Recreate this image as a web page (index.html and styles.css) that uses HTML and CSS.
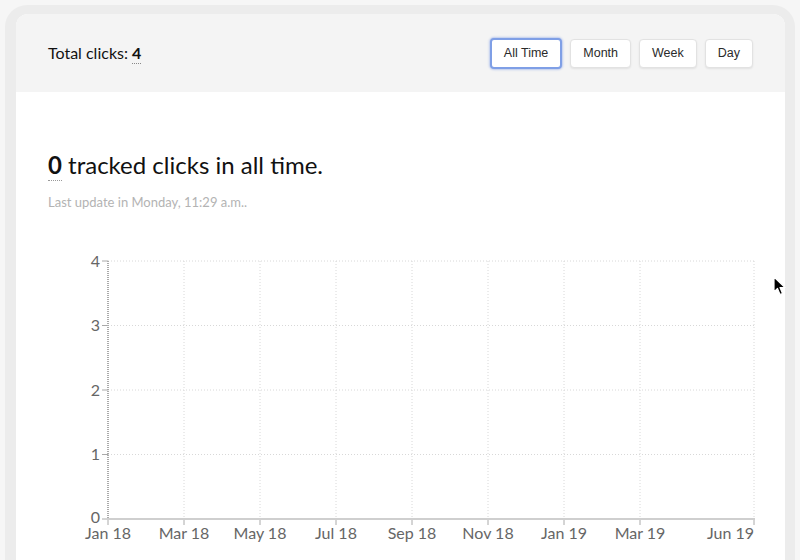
FILE: index.html
```html
<!DOCTYPE html>
<html>
<head>
<meta charset="utf-8">
<link rel="stylesheet" href="styles.css">
</head>
<body>
<div class="frame">
  <div class="card">
    <div class="card-header">
      <div class="total">Total clicks: <span class="num">4</span></div>
      <div class="ranges">
        <button class="btn active">All Time</button>
        <button class="btn">Month</button>
        <button class="btn">Week</button>
        <button class="btn">Day</button>
      </div>
    </div>
    <div class="card-body">
      <h2 class="title"><span class="num">0</span> tracked clicks in all time.</h2>
      <p class="updated">Last update in Monday, 11:29 a.m..</p>
      <svg class="chart" width="769" height="320" viewBox="16 240 769 320">
        <g class="grid">
          <line x1="108" y1="260" x2="754" y2="260"/>
          <line x1="108" y1="324.5" x2="754" y2="324.5"/>
          <line x1="108" y1="389" x2="754" y2="389"/>
          <line x1="108" y1="453.5" x2="754" y2="453.5"/>
          <line x1="184" y1="260" x2="184" y2="518"/>
          <line x1="260" y1="260" x2="260" y2="518"/>
          <line x1="336" y1="260" x2="336" y2="518"/>
          <line x1="412" y1="260" x2="412" y2="518"/>
          <line x1="488" y1="260" x2="488" y2="518"/>
          <line x1="564" y1="260" x2="564" y2="518"/>
          <line x1="640" y1="260" x2="640" y2="518"/>
          <line x1="754" y1="260" x2="754" y2="518"/>
        </g>
        <line class="yaxis" x1="108" y1="260" x2="108" y2="518"/>
        <g class="ticks">
          <line x1="102" y1="260" x2="108" y2="260"/>
          <line x1="102" y1="324.5" x2="108" y2="324.5"/>
          <line x1="102" y1="389" x2="108" y2="389"/>
          <line x1="102" y1="453.5" x2="108" y2="453.5"/>
          <line x1="102" y1="518" x2="108" y2="518"/>
          <line x1="108" y1="518" x2="108" y2="524"/>
          <line x1="184" y1="518" x2="184" y2="524"/>
          <line x1="260" y1="518" x2="260" y2="524"/>
          <line x1="336" y1="518" x2="336" y2="524"/>
          <line x1="412" y1="518" x2="412" y2="524"/>
          <line x1="488" y1="518" x2="488" y2="524"/>
          <line x1="564" y1="518" x2="564" y2="524"/>
          <line x1="640" y1="518" x2="640" y2="524"/>
          <line x1="754" y1="518" x2="754" y2="524"/>
        </g>
        <line class="xaxis" x1="107" y1="518" x2="755" y2="518"/>
        <g class="ylabels">
          <text x="100" y="265.5">4</text>
          <text x="100" y="330">3</text>
          <text x="100" y="394.5">2</text>
          <text x="100" y="459">1</text>
          <text x="100" y="522">0</text>
        </g>
        <g class="xlabels">
          <text x="108" y="538">Jan 18</text>
          <text x="184" y="538">Mar 18</text>
          <text x="260" y="538">May 18</text>
          <text x="336" y="538">Jul 18</text>
          <text x="412" y="538">Sep 18</text>
          <text x="488" y="538">Nov 18</text>
          <text x="564" y="538">Jan 19</text>
          <text x="640" y="538">Mar 19</text>
          <text x="754" y="538" class="end">Jun 19</text>
        </g>
      </svg>
    </div>
  </div>
</div>
<svg class="cursor" width="14" height="22" viewBox="0 0 14 22">
  <path d="M1 1 L1 16 L4.5 12.5 L7 18.5 L9.5 17.5 L7 11.5 L12 11.5 Z" fill="#000" stroke="#fff" stroke-width="1.2" stroke-linejoin="round"/>
</svg>
</body>
</html>
```

FILE: styles.css
```css
html, body {
  margin: 0;
  padding: 0;
}
body {
  background: #f6f6f6;
  width: 800px;
  height: 560px;
  overflow: hidden;
  position: relative;
  font-family: "Lato", "Open Sans", sans-serif;
  color: #111;
}
.frame {
  margin: 5px 5px 0 5px;
  padding: 9px 10px 0 11px;
  background: #ececec;
  border-radius: 22px 22px 0 0;
  height: 560px;
}
.card {
  background: #fff;
  border-radius: 12px 12px 0 0;
  overflow: hidden;
  height: 560px;
}
.card-header {
  background: #f4f4f4;
  height: 78px;
  padding: 0 32px 0 32px;
  display: flex;
  align-items: center;
  justify-content: space-between;
}
.total {
  font-size: 16px;
  color: #111;
  padding-bottom: 2px;
}
.num {
  font-weight: 700;
  border-bottom: 1px dotted #888;
  padding-bottom: 1px;
}
.ranges {
  display: flex;
  gap: 8px;
  align-items: center;
}
.btn {
  font-family: "Liberation Sans", Arial, sans-serif;
  font-size: 12.5px;
  color: #2a2a2a;
  background: #fff;
  border: 1px solid #e2e2e2;
  border-radius: 4px;
  height: 29px;
  padding: 0 12px;
  box-shadow: 0 1px 2px rgba(0,0,0,0.08);
}
.btn.active {
  border: 2px solid #7f9fe6;
  box-shadow: 0 0 2px 1px rgba(120,150,230,0.45);
  height: 31px;
  padding: 0 12px;
}
.card-body {
  padding: 58px 32px 0 32px;
}
.title {
  margin: 0;
  font-size: 24px;
  font-weight: 400;
  line-height: 30px;
  color: #111;
}
.title .num {
  border-bottom-color: #999;
}
.updated {
  margin: 14px 0 0 0;
  font-size: 13px;
  color: #b3b3b3;
}
.chart {
  display: block;
  margin: 31px 0 0 -32px;
}
.grid line {
  stroke: #d8d8d8;
  stroke-width: 1;
  stroke-dasharray: 1 2;
}
.yaxis {
  stroke: #aaa;
  stroke-width: 2;
  stroke-dasharray: 1 1;
}
.xaxis {
  stroke: #cfcfcf;
  stroke-width: 2;
}
.ticks line {
  stroke: #aaa;
  stroke-width: 1;
}
.ylabels text {
  font-family: "Lato", sans-serif;
  font-size: 16px;
  fill: #666;
  text-anchor: end;
}
.xlabels text {
  font-family: "Lato", sans-serif;
  font-size: 16px;
  fill: #666;
  text-anchor: middle;
}
.xlabels text.end {
  text-anchor: end;
}
.cursor {
  position: absolute;
  left: 773px;
  top: 276px;
}
```
